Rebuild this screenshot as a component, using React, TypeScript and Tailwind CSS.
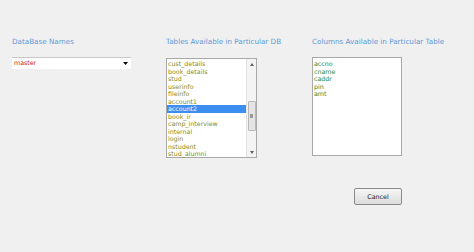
const tables = [
  "cust_details",
  "book_details",
  "stud",
  "userinfo",
  "fileinfo",
  "account1",
  "account2",
  "book_ir",
  "camp_interview",
  "internal",
  "login",
  "nstudent",
  "stud_alumni",
];

const columns = ["accno", "cname", "caddr", "pin", "amt"];

function Label({ children }: { children: string }) {
  return (
    <div className="h-[20px] text-[7.2px] leading-[10px] text-[#5b9ad8] whitespace-nowrap">
      {children}
    </div>
  );
}

export default function App() {
  return (
    <div
      className="w-[474px] h-[252px] bg-[#f0f0f0] flex pl-[12px] pt-[37px]"
      style={{ fontFamily: "'DejaVu Sans', Verdana, sans-serif" }}
    >
      {/* database */}
      <div className="w-[154px]">
        <Label>DataBase Names</Label>
        <div className="w-[119px] h-[12px] bg-white border-t border-[#c8c8c8] flex items-center justify-between pl-[2px] pr-[3px]">
          <span className="text-[6.3px] leading-none text-[#d42020]">master</span>
          <svg width="5" height="3" viewBox="0 0 5 3">
            <path d="M0 0 H5 L2.5 3 Z" fill="#000" />
          </svg>
        </div>
      </div>

      {/* tables */}
      <div className="w-[146px]">
        <Label>Tables Available in Particular DB</Label>
        <div className="w-[91px] h-[100px] bg-white border border-[#a8a8a8] flex mt-[1px]">
          <div className="flex-1 pt-[1px]">
            {tables.map((t) => (
              <div
                key={t}
                className={
                  t === "account2"
                    ? "h-[7.5px] text-[6.3px] leading-[7.5px] pl-[1px] bg-[#3b8df0] text-white"
                    : "h-[7.5px] text-[6.3px] leading-[7.5px] pl-[1px] text-[#8a8a10]"
                }
              >
                {t}
              </div>
            ))}
          </div>
          <div className="w-[10px] bg-[#f4f4f4] border-l border-[#e2e2e2] flex flex-col items-center pt-[4px]">
            <svg width="4" height="3" viewBox="0 0 4 3">
              <path d="M0 3 L2 0 L4 3 Z" fill="#606060" />
            </svg>
            <div className="w-[8px] h-[30px] mt-[35px] rounded-[1px] border border-[#b8b8b8] bg-[#e4e4e4] flex items-center justify-center">
              <div className="w-[3px] h-[4px] bg-[#9a9a9a]" />
            </div>
            <svg className="mt-[20px]" width="4" height="3" viewBox="0 0 4 3">
              <path d="M0 0 H4 L2 3 Z" fill="#606060" />
            </svg>
          </div>
        </div>
      </div>

      {/* columns */}
      <div className="w-[140px]">
        <Label>Columns Available in Particular Table</Label>
        <div className="w-[90px] h-[99px] bg-white border border-[#a8a8a8] pt-[2px] pl-[1px]">
          {columns.map((c) => (
            <div key={c} className="h-[7.5px] text-[6.3px] leading-[7.5px] text-[#2e8a2e]">
              {c}
            </div>
          ))}
        </div>
        <button className="mt-[32px] ml-[42px] w-[48px] h-[17px] rounded-[2px] border border-[#8a8a8a] bg-gradient-to-b from-[#f6f6f6] to-[#dcdcdc] text-[6.3px] text-[#222] flex items-center justify-center">
          Cancel
        </button>
      </div>
    </div>
  );
}
